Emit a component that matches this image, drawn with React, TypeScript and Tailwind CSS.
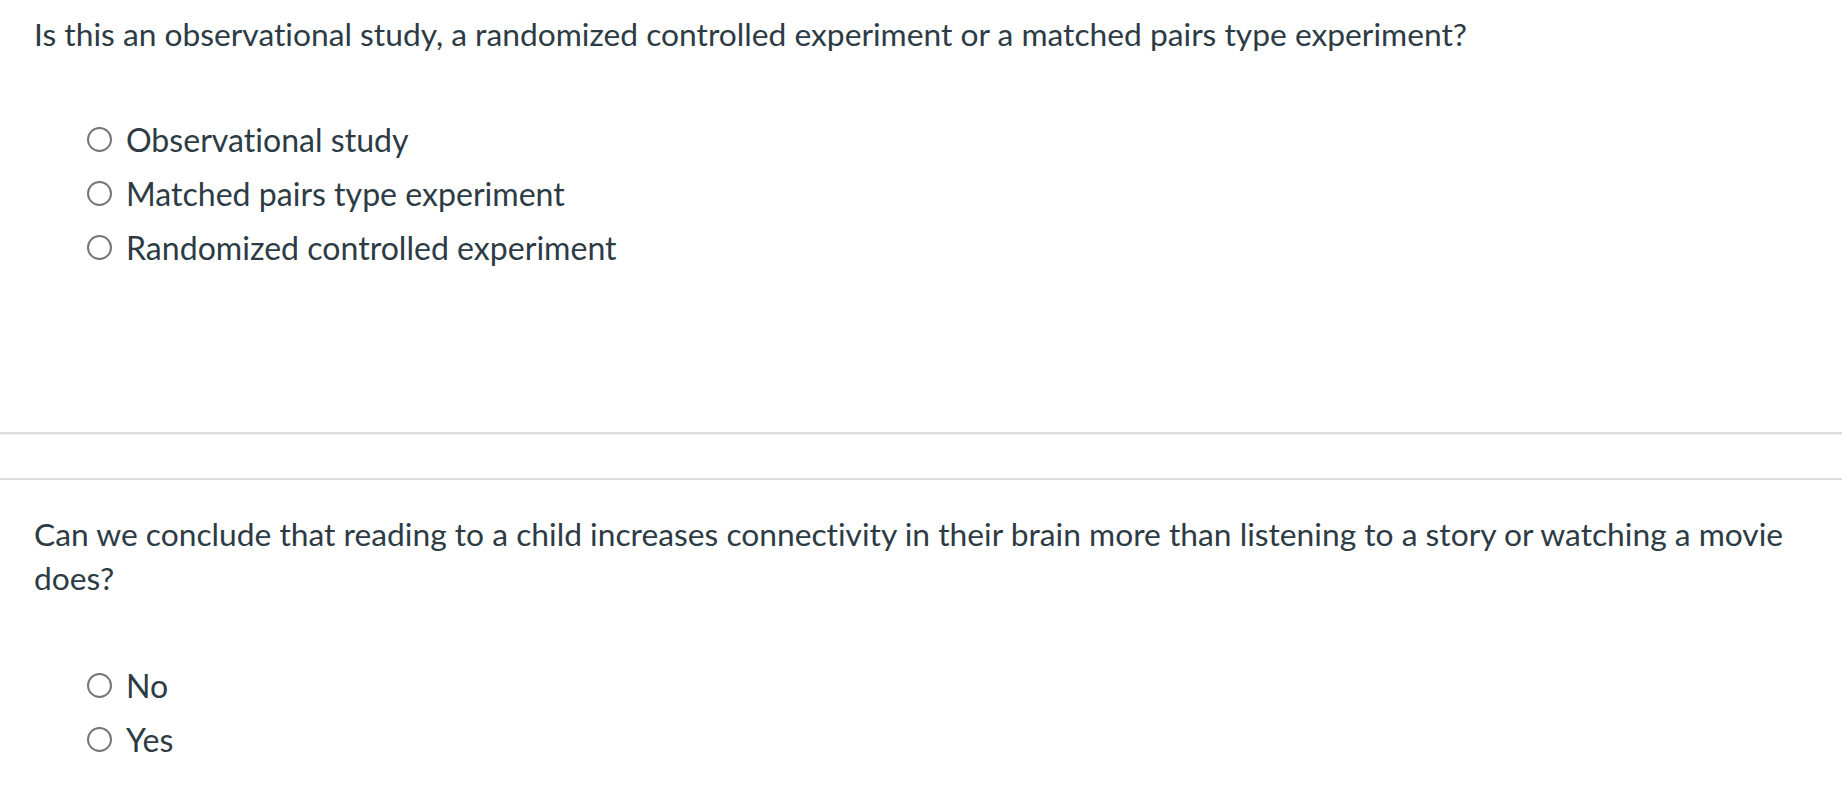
import React from "react";

function Radio({ label }: { label: string }) {
  return (
    <label className="flex h-[54px] items-center">
      <span className="ml-[87px] box-border h-[25px] w-[25px] shrink-0 rounded-full border-[2px] border-[#767676] bg-white" />
      <span className="ml-[14px] text-[32.1px] leading-[43px]">{label}</span>
    </label>
  );
}

export default function App() {
  return (
    <div
      className="min-h-[792px] w-full bg-white text-[31.75px] text-[#2d3b45] [font-variant-ligatures:none]"
      style={{ fontFamily: "Lato, 'Open Sans', sans-serif" }}
    >
      <div className="h-[432px]">
        <div className="pl-[34px] pr-[34px] pt-[13px] leading-[43px]">
          Is this an observational study, a randomized controlled experiment or a matched pairs type experiment?
        </div>
        <div className="mt-[56px]">
          <Radio label="Observational study" />
          <Radio label="Matched pairs type experiment" />
          <Radio label="Randomized controlled experiment" />
        </div>
      </div>
      <div className="h-[2px] bg-[#dcdcdc] shadow-[0_1px_2px_rgba(0,0,0,0.06)]" />
      <div className="h-[44px]" />
      <div className="h-[2px] bg-[#dcdcdc]" />
      <div>
        <div className="pl-[34px] pr-[34px] pt-[33px] leading-[43.5px]">
          Can we conclude that reading to a child increases connectivity in their brain more than listening to a story or watching a movie does?
        </div>
        <div className="mt-[58px]">
          <Radio label="No" />
          <Radio label="Yes" />
        </div>
      </div>
    </div>
  );
}
